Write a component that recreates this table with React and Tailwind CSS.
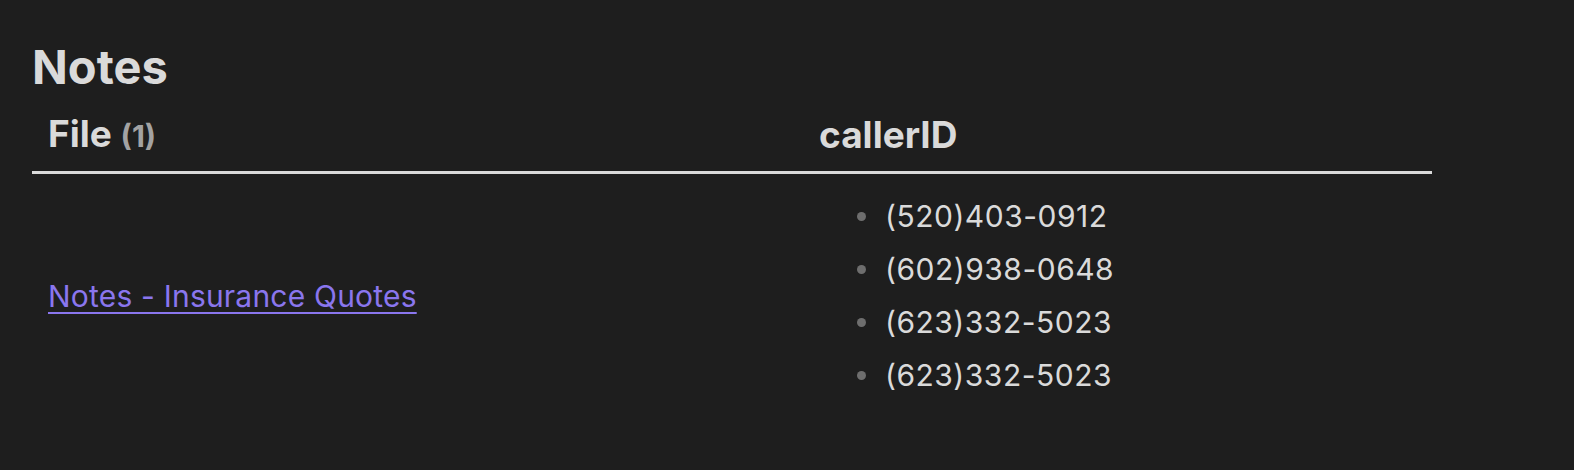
import React from "react";

const phones = ["(520)403-0912", "(602)938-0648", "(623)332-5023", "(623)332-5023"];

export default function App() {
  return (
    <div className="min-h-[470px] w-full bg-[#1e1e1e] text-[#dadada] pl-8 pt-[39px] font-['Inter','Liberation_Sans',sans-serif]">
      <h1 className="text-[47px] font-bold leading-[56px]">Notes</h1>

      <table className="w-[1400px] border-collapse">
        <thead>
          <tr className="border-b-[3px] border-[#dadada]">
            <th className="w-[771px] px-4 pt-[15px] pb-[11px] text-left text-[37px] font-bold leading-[48px]">
              File <span className="text-[30px] text-[#a3a3a3]">(1)</span>
            </th>
            <th className="px-4 pt-[15px] pb-[11px] text-left text-[37px] font-bold leading-[48px]">
              callerID
            </th>
          </tr>
        </thead>
        <tbody>
          <tr>
            <td className="px-4 align-middle">
              <a href="#" className="text-[30px] tracking-[0.2px] text-[#8a76ee] underline decoration-2 underline-offset-[5px]">
                Notes - Insurance Quotes
              </a>
            </td>
            <td className="px-4 pt-[16px] pb-[16px] align-middle">
              <ul className="flex flex-col">
                {phones.map((p, i) => (
                  <li key={i} className="flex items-center gap-[19px] pl-[38px] h-[53px] text-[30px] tracking-[0.5px]">
                    <span className="w-[9px] h-[9px] rounded-full bg-[#6e6e6e] shrink-0" />
                    <span>{p}</span>
                  </li>
                ))}
              </ul>
            </td>
          </tr>
        </tbody>
      </table>
    </div>
  );
}
